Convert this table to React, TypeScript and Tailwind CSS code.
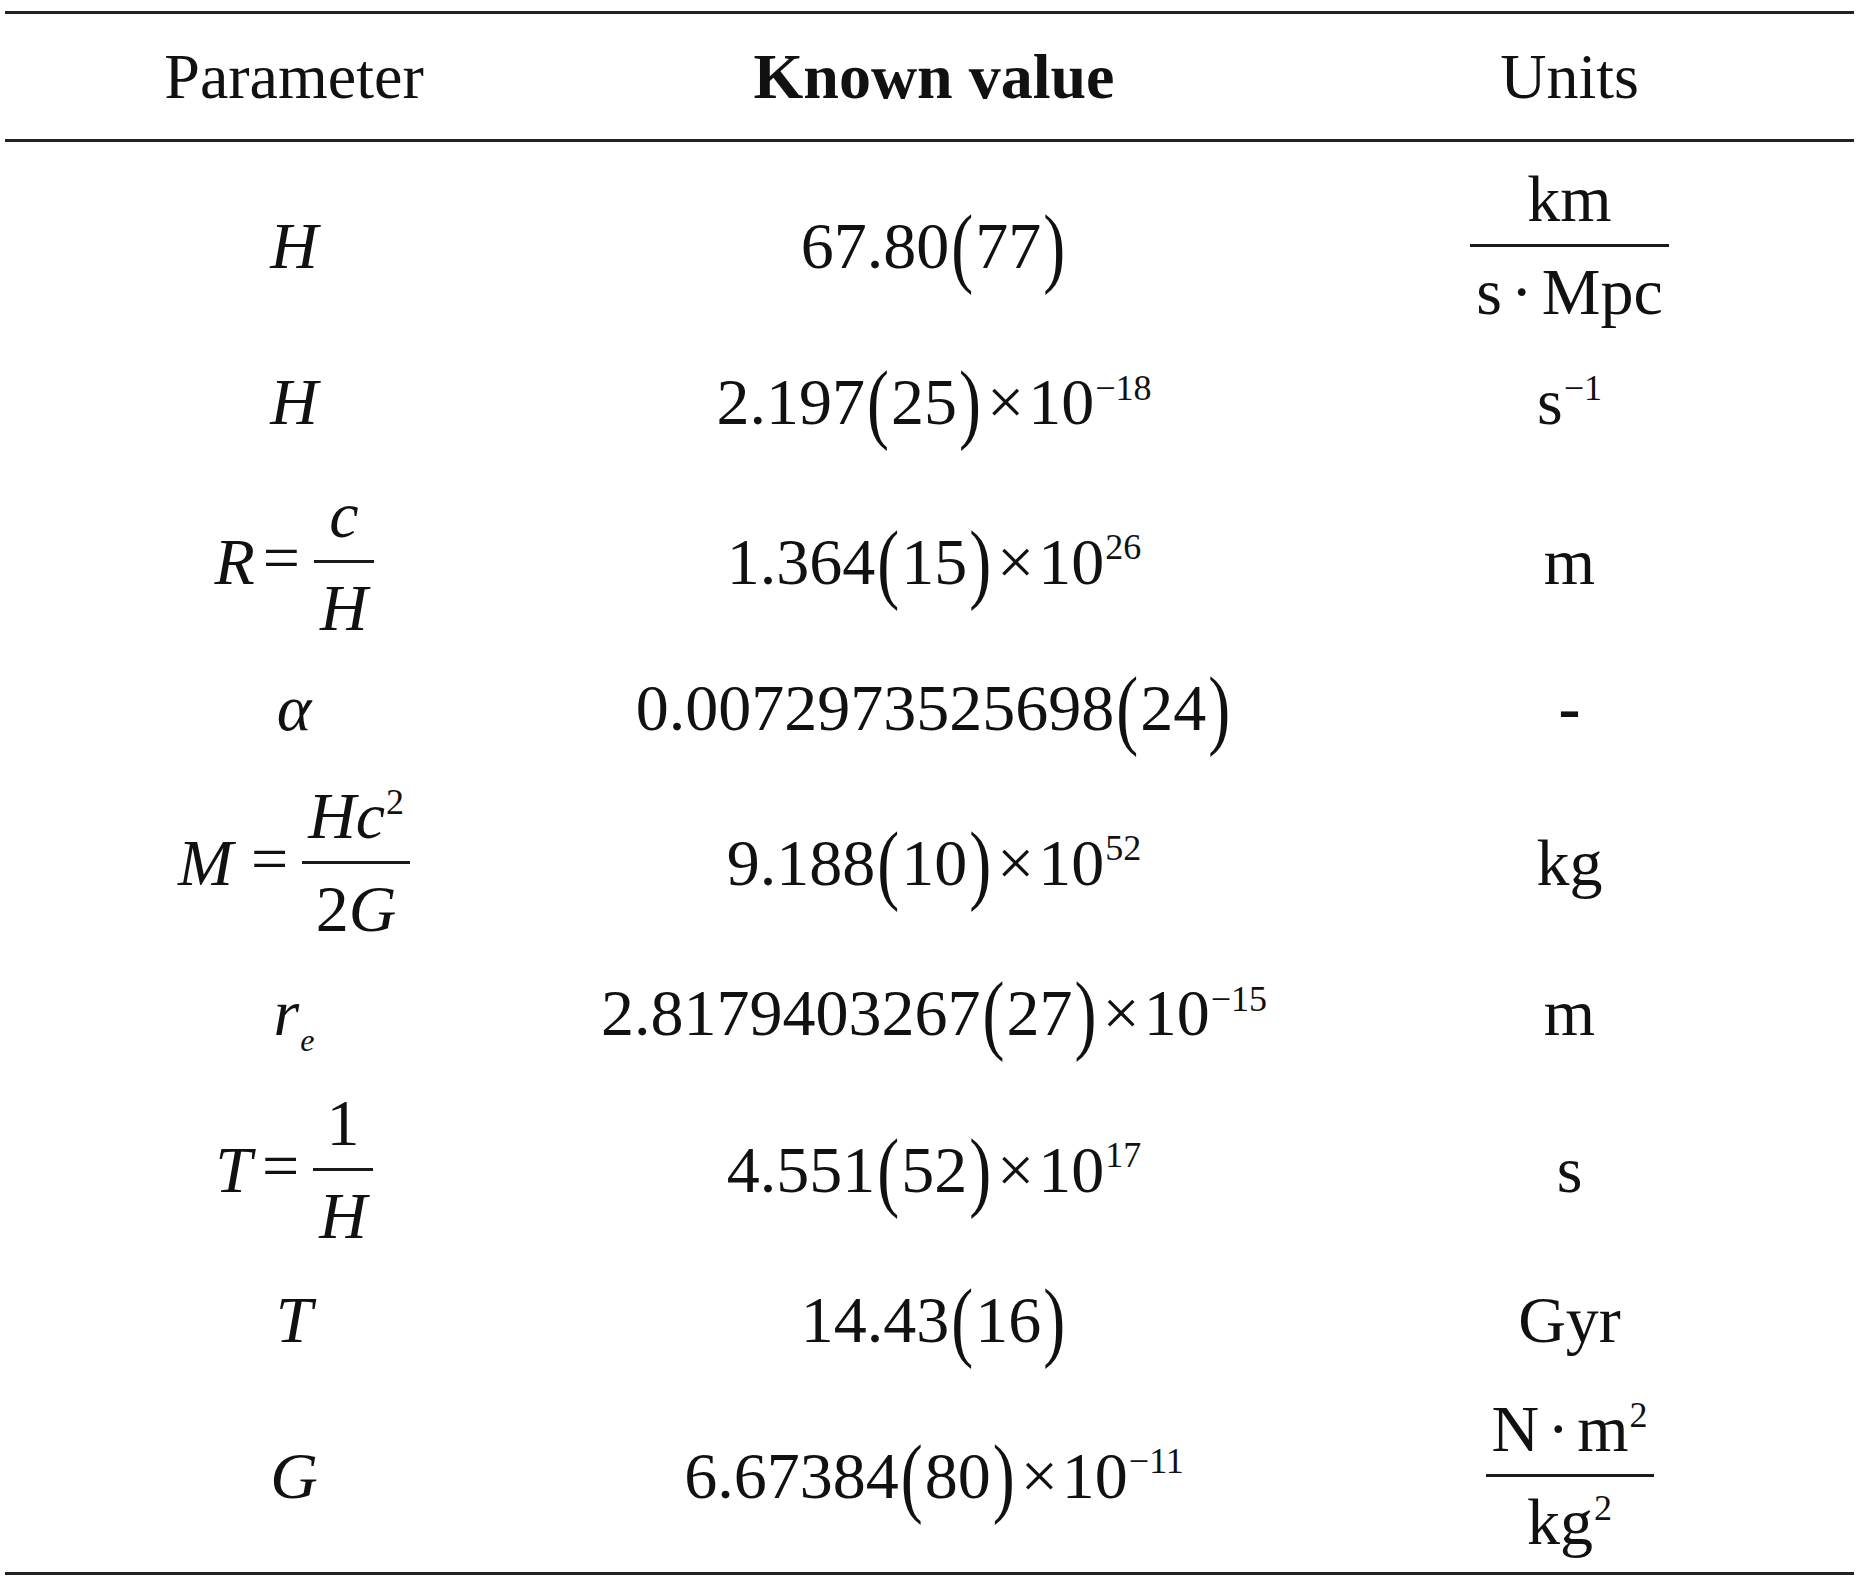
import type { ReactNode } from "react";

// Table of cosmological / physical constants, rendered like a typeset paper table.

function I({ children }: { children: ReactNode }) {
  return <span className="italic">{children}</span>;
}

function Paren({ children }: { children: ReactNode }) {
  return <span className="inline-block scale-y-[1.36] mx-[2px]">{children}</span>;
}

function Sup({ children }: { children: ReactNode }) {
  return <sup className="text-[36px] -top-[0.68em] ml-[1px]">{children}</sup>;
}

function Val({ m, u, e }: { m: string; u: string; e?: string }) {
  return (
    <span className="whitespace-nowrap">
      {m}
      <Paren>(</Paren>
      {u}
      <Paren>)</Paren>
      {e && (
        <>
          <span className="mx-[4px]">×</span>10
          <Sup>{e}</Sup>
        </>
      )}
    </span>
  );
}

function Frac({ num, den }: { num: ReactNode; den: ReactNode }) {
  return (
    <span className="inline-flex flex-col items-center">
      <span className="leading-none px-[6px] whitespace-nowrap">{num}</span>
      <span className="self-stretch h-[3px] bg-[#1a1a1a] my-[12px]" />
      <span className="leading-none px-[6px] whitespace-nowrap">{den}</span>
    </span>
  );
}

function Eq({ lhs, frac, gap }: { lhs: ReactNode; frac: ReactNode; gap: string }) {
  return (
    <span className="inline-flex items-center">
      <span className="leading-none">{lhs}</span>
      <span className={`leading-none relative -top-[4px] ${gap}`}>=</span>
      {frac}
    </span>
  );
}

const rows: { h: string; p: ReactNode; v: ReactNode; u: ReactNode }[] = [
  {
    h: "h-[156px]",
    p: <I>H</I>,
    v: <Val m="67.80" u="77" />,
    u: (
      <Frac
        num="km"
        den={
          <>
            s<span className="mx-[9px]">·</span>Mpc
          </>
        }
      />
    ),
  },
  {
    h: "h-[160px]",
    p: <I>H</I>,
    v: <Val m="2.197" u="25" e="−18" />,
    u: (
      <span>
        s<Sup>−1</Sup>
      </span>
    ),
  },
  {
    h: "h-[151px]",
    p: (
      <Eq
        gap="ml-[8px] mr-[14px]"
        lhs={<I>R</I>}
        frac={<Frac num={<I>c</I>} den={<I>H</I>} />}
      />
    ),
    v: <Val m="1.364" u="15" e="26" />,
    u: "m",
  },
  {
    h: "h-[150px]",
    p: <I>α</I>,
    v: <Val m="0.0072973525698" u="24" />,
    u: <span className="font-bold">-</span>,
  },
  {
    h: "h-[153px]",
    p: (
      <Eq
        gap="ml-[18px] mr-[14px]"
        lhs={<I>M</I>}
        frac={
          <Frac
            num={
              <>
                <I>Hc</I>
                <Sup>2</Sup>
              </>
            }
            den={
              <>
                2<I>G</I>
              </>
            }
          />
        }
      />
    ),
    v: <Val m="9.188" u="10" e="52" />,
    u: "kg",
  },
  {
    h: "h-[154px]",
    p: (
      <span>
        <I>r</I>
        <span className="italic text-[32px] relative top-[16px] ml-[1px]">e</span>
      </span>
    ),
    v: <Val m="2.8179403267" u="27" e="−15" />,
    u: "m",
  },
  {
    h: "h-[154px]",
    p: (
      <Eq
        gap="ml-[10px] mr-[14px]"
        lhs={<I>T</I>}
        frac={<Frac num="1" den={<I>H</I>} />}
      />
    ),
    v: <Val m="4.551" u="52" e="17" />,
    u: "s",
  },
  {
    h: "h-[152px]",
    p: <I>T</I>,
    v: <Val m="14.43" u="16" />,
    u: "Gyr",
  },
  {
    h: "h-[152px]",
    p: <I>G</I>,
    v: <Val m="6.67384" u="80" e="−11" />,
    u: (
      <Frac
        num={
          <>
            N<span className="mx-[8px]">·</span>m<Sup>2</Sup>
          </>
        }
        den={
          <>
            kg<Sup>2</Sup>
          </>
        }
      />
    ),
  },
];

export default function App() {
  return (
    <div className="w-[1859px] h-[1585px] bg-white text-[#111] font-['Liberation_Serif','Times_New_Roman',serif]">
      <div className="pt-[11px] px-[5px]">
        <div className="h-[3px] bg-[#222]" />
        <div className="grid grid-cols-[578px_702px_1fr] h-[125px] items-center text-[64px] leading-none">
          <div className="text-center">Parameter</div>
          <div className="text-center font-bold">Known value</div>
          <div className="text-center">Units</div>
        </div>
        <div className="h-[3px] bg-[#222]" />
        <div className="pt-[24px] pb-[24px] text-[66px] leading-none">
          {rows.map((r, i) => (
            <div key={i} className={`grid grid-cols-[578px_702px_1fr] items-center ${r.h}`}>
              <div className="flex justify-center items-center">{r.p}</div>
              <div className="flex justify-center items-center">{r.v}</div>
              <div className="flex justify-center items-center">{r.u}</div>
            </div>
          ))}
        </div>
        <div className="h-[3px] bg-[#222]" />
      </div>
    </div>
  );
}
